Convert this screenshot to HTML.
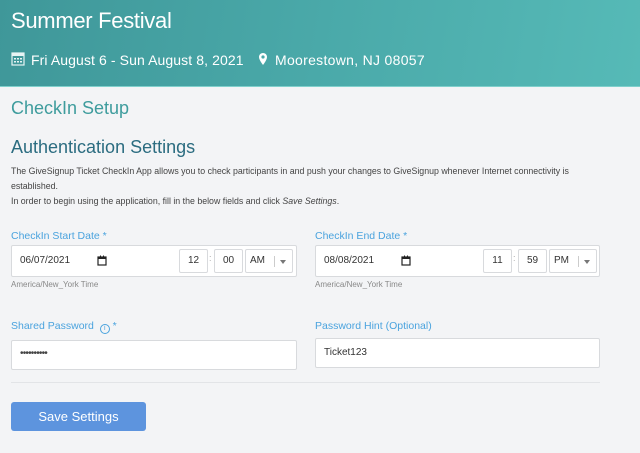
<!DOCTYPE html>
<html><head><style>
*{margin:0;padding:0;box-sizing:border-box}
body{width:640px;height:453px;overflow:hidden;background:#f3f4f6;font-family:"Liberation Sans",sans-serif;position:relative}
.a{position:absolute;white-space:nowrap}
.hdr{position:absolute;left:0;top:0;width:640px;height:87px;background:linear-gradient(100deg,#3f9799 0%,#4aa9a9 50%,#56bab7 100%);border-bottom:1px solid #7fd0cc}
.lbl{color:#4aa3de;font-size:10.5px}
.box{position:absolute;background:#fff;border:1px solid #d8dadd;border-radius:2px}
.sm{position:absolute;background:#fff;border:1px solid #d8dadd;border-radius:2px;font-size:10px;color:#333;text-align:center;line-height:22px}
.help{color:#888;font-size:8px}
</style></head><body>
<div class="hdr"></div>
<div class="a" style="left:11px;top:8px;color:#fff;font-size:22px;letter-spacing:-0.3px">Summer Festival</div>
<svg class="a" style="left:11px;top:52px" width="14" height="14" viewBox="0 0 14 14"><rect x="1" y="1" width="12" height="12" fill="none" stroke="#e6f4f4" stroke-width="1.2"/><rect x="1" y="1" width="12" height="3" fill="#e6f4f4"/><g fill="#e6f4f4"><rect x="3" y="6" width="2" height="1.5"/><rect x="6" y="6" width="2" height="1.5"/><rect x="9" y="6" width="2" height="1.5"/><rect x="3" y="9" width="2" height="1.5"/><rect x="6" y="9" width="2" height="1.5"/><rect x="9" y="9" width="2" height="1.5"/></g></svg>
<div class="a" style="left:31px;top:52px;color:#fff;font-size:14px;letter-spacing:0.1px">Fri August 6 - Sun August 8, 2021</div>
<svg class="a" style="left:258px;top:52px" width="10" height="14" viewBox="0 0 10 14"><path d="M5 1C2.5 1 1 3 1 5c0 3 4 8 4 8s4-5 4-8c0-2-1.5-4-4-4z" fill="#fff"/><circle cx="5" cy="5" r="1.6" fill="#4aa9a9"/></svg>
<div class="a" style="left:275px;top:52px;color:#fff;font-size:14px;letter-spacing:0.3px">Moorestown, NJ 08057</div>
<div class="a" style="left:11px;top:98px;color:#3e9c9d;font-size:18px">CheckIn Setup</div>
<div class="a" style="left:11px;top:137px;color:#2b6c80;font-size:18px">Authentication Settings</div>
<div class="a" style="left:11px;top:164px;color:#444;font-size:8.8px;line-height:15px;white-space:normal;width:590px">The GiveSignup Ticket CheckIn App allows you to check participants in and push your changes to GiveSignup whenever Internet connectivity is established.<br>In order to begin using the application, fill in the below fields and click <i>Save Settings</i>.</div>

<div class="a lbl" style="left:11px;top:230px">CheckIn Start Date *</div>
<div class="box" style="left:11px;top:245px;width:286px;height:32px"></div>
<div class="a" style="left:20px;top:255px;font-size:10px;color:#333">06/07/2021</div>
<svg class="a" style="left:97px;top:255px" width="10" height="11" viewBox="0 0 10 11"><rect x="1" y="2" width="8" height="8" fill="none" stroke="#222" stroke-width="1.2"/><rect x="1" y="2" width="8" height="2" fill="#222"/><rect x="3" y="0.5" width="1" height="2" fill="#222"/><rect x="6" y="0.5" width="1" height="2" fill="#222"/></svg>
<div class="sm" style="left:179px;top:249px;width:29px;height:24px">12</div>
<div class="a" style="left:209px;top:253px;font-size:9px;color:#aaa">:</div>
<div class="sm" style="left:214px;top:249px;width:29px;height:24px">00</div>
<div class="sm" style="left:245px;top:249px;width:48px;height:24px;text-align:left;padding-left:4px">AM<span style="position:absolute;left:28px;top:6px;width:1px;height:11px;background:#ccc"></span><span style="position:absolute;left:34px;top:10px;border:3.5px solid transparent;border-top:4px solid #777"></span></div>
<div class="a help" style="left:11px;top:280px">America/New_York Time</div>

<div class="a lbl" style="left:315px;top:230px">CheckIn End Date *</div>
<div class="box" style="left:315px;top:245px;width:285px;height:32px"></div>
<div class="a" style="left:324px;top:255px;font-size:10px;color:#333">08/08/2021</div>
<svg class="a" style="left:401px;top:255px" width="10" height="11" viewBox="0 0 10 11"><rect x="1" y="2" width="8" height="8" fill="none" stroke="#222" stroke-width="1.2"/><rect x="1" y="2" width="8" height="2" fill="#222"/><rect x="3" y="0.5" width="1" height="2" fill="#222"/><rect x="6" y="0.5" width="1" height="2" fill="#222"/></svg>
<div class="sm" style="left:483px;top:249px;width:29px;height:24px">11</div>
<div class="a" style="left:513px;top:253px;font-size:9px;color:#aaa">:</div>
<div class="sm" style="left:518px;top:249px;width:29px;height:24px">59</div>
<div class="sm" style="left:549px;top:249px;width:48px;height:24px;text-align:left;padding-left:4px">PM<span style="position:absolute;left:28px;top:6px;width:1px;height:11px;background:#ccc"></span><span style="position:absolute;left:34px;top:10px;border:3.5px solid transparent;border-top:4px solid #777"></span></div>
<div class="a help" style="left:315px;top:280px">America/New_York Time</div>

<div class="a lbl" style="left:11px;top:320px">Shared Password &nbsp;<span style="display:inline-block;width:10px;height:10px;border:1px solid #4aa3de;border-radius:50%;font-size:7px;text-align:center;line-height:8px;vertical-align:-1px">i</span> *</div>
<div class="box" style="left:11px;top:340px;width:286px;height:30px"></div>
<div class="a" style="left:20px;top:348px;font-size:10px;color:#444;letter-spacing:-0.8px">••••••••••</div>
<div class="a lbl" style="left:315px;top:320px">Password Hint (Optional)</div>
<div class="box" style="left:315px;top:338px;width:285px;height:30px"></div>
<div class="a" style="left:324px;top:347px;font-size:10px;color:#333">Ticket123</div>

<div class="a" style="left:11px;top:382px;width:589px;height:1px;background:#e2e4e7"></div>
<div class="a" style="left:11px;top:402px;width:135px;height:29px;background:#5d94de;border-radius:3px;color:#fff;font-size:13px;text-align:center;line-height:29px">Save Settings</div>
</body></html>
